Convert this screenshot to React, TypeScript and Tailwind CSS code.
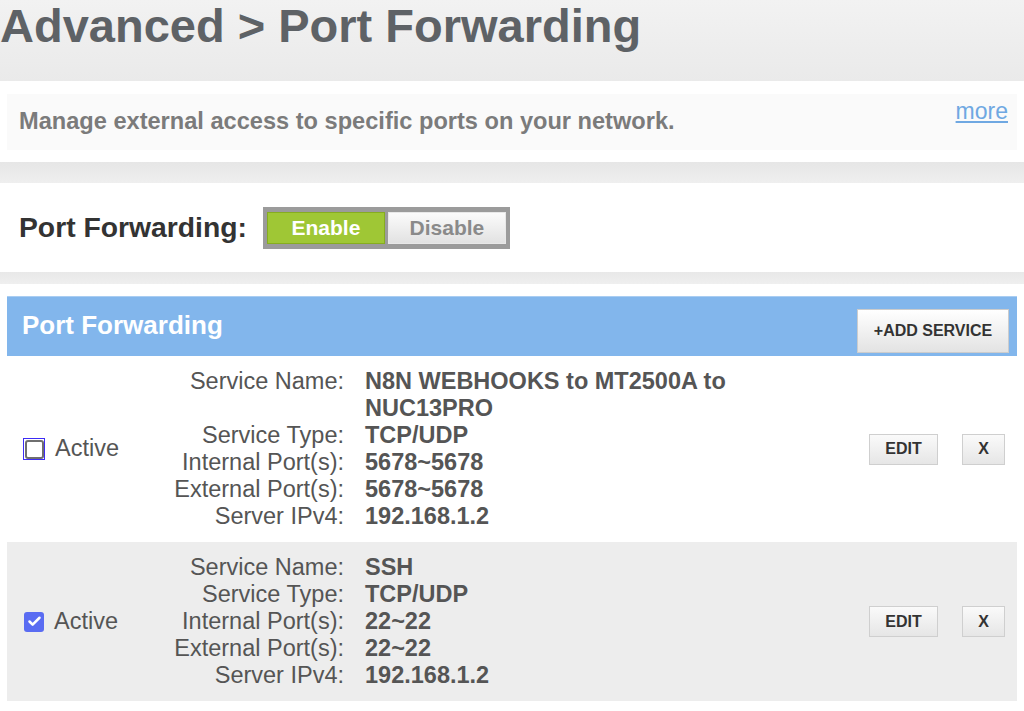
import { Check } from "lucide-react";

type Service = {
  active: boolean;
  name: string;
  type: string;
  internal: string;
  external: string;
  ip: string;
};

const SERVICES: Service[] = [
  {
    active: false,
    name: "N8N WEBHOOKS to MT2500A to NUC13PRO",
    type: "TCP/UDP",
    internal: "5678~5678",
    external: "5678~5678",
    ip: "192.168.1.2",
  },
  {
    active: true,
    name: "SSH",
    type: "TCP/UDP",
    internal: "22~22",
    external: "22~22",
    ip: "192.168.1.2",
  },
];

function Checkbox({ checked }: { checked: boolean }) {
  if (checked) {
    return (
      <span className="ml-[1px] flex h-[20px] w-[20px] items-center justify-center rounded-[3px] bg-[#5a6cf2]">
        <Check className="h-[15px] w-[15px] text-white" strokeWidth={4} />
      </span>
    );
  }
  return (
    <span className="flex h-[22px] w-[22px] items-center justify-center border border-[#3d2cf5]">
      <span className="h-[19px] w-[19px] rounded-[3px] border-2 border-[#6f6f6f] bg-white" />
    </span>
  );
}

function SmallButton({ children, wide }: { children: string; wide?: boolean }) {
  return (
    <button
      type="button"
      className={
        "flex h-[31px] items-center justify-center border border-[#cfcfcf] bg-gradient-to-b from-[#fafafa] to-[#e6e6e6] text-[16px] font-bold text-[#333] " +
        (wide ? "w-[69px]" : "w-[43px]")
      }
    >
      {children}
    </button>
  );
}

function ServiceRow({ s, shaded }: { s: Service; shaded: boolean }) {
  const rows: [string, string][] = [
    ["Service Name:", s.name],
    ["Service Type:", s.type],
    ["Internal Port(s):", s.internal],
    ["External Port(s):", s.external],
    ["Server IPv4:", s.ip],
  ];
  return (
    <div
      className={
        "mx-[7px] flex items-center py-3 pl-4 pr-3 " +
        (shaded ? "bg-[#ededed]" : "bg-white")
      }
    >
      <div className="flex w-[147px] items-center gap-[10px]">
        <Checkbox checked={s.active} />
        <span className="text-[23.5px] text-[#555]">Active</span>
      </div>
      <div className="grid grid-cols-[174px_440px] gap-x-[21px] text-[23.5px] leading-[27px] text-[#555]">
        {rows.map(([label, value]) => (
          <div key={label} className="contents">
            <div className="text-right">{label}</div>
            <div className="font-bold">{value}</div>
          </div>
        ))}
      </div>
      <div className="ml-auto flex items-center gap-[24px]">
        <SmallButton wide>EDIT</SmallButton>
        <SmallButton>X</SmallButton>
      </div>
    </div>
  );
}

export default function App() {
  return (
    <div className="min-h-[711px] w-[1024px] bg-white font-['Liberation_Sans',Arial,sans-serif]">
      {/* page title */}
      <div className="h-[81px] bg-gradient-to-b from-[#f2f2f2] to-[#eaeaea]">
        <h1 className="text-[47px] font-bold leading-[52px] text-[#5e6266]">
          Advanced &gt; Port Forwarding
        </h1>
      </div>

      {/* description */}
      <div className="pb-3 pt-[13px]">
        <div className="mx-[7px] flex h-[56px] justify-between bg-[#fafafa] pl-3 pr-[9px]">
          <p className="self-center text-[23.6px] font-bold text-[#7b7b7b]">
            Manage external access to specific ports on your network.
          </p>
          <a href="#" className="self-start text-[23px] text-[#6fa8e2] underline">
            more
          </a>
        </div>
      </div>

      <div className="h-[21px] bg-gradient-to-b from-[#e6e6e6] to-[#efefef]" />

      {/* enable toggle */}
      <div className="flex h-[89px] items-center gap-4 px-[19px]">
        <span className="text-[28.3px] font-bold text-[#333]">Port Forwarding:</span>
        <div className="flex gap-[3px] bg-[#9b9b9b] px-[4px] py-[5px]">
          <button
            type="button"
            className="flex h-[32px] w-[118px] items-center justify-center border border-[#86ad1f] bg-[#9fc735] text-[21px] font-bold text-white"
          >
            Enable
          </button>
          <button
            type="button"
            className="flex h-[32px] w-[118px] items-center justify-center border border-[#e8e8e8] bg-gradient-to-b from-[#fbfbfb] to-[#e2e2e2] text-[21px] font-bold text-[#8a8a8a]"
          >
            Disable
          </button>
        </div>
      </div>

      <div className="h-[12px] bg-gradient-to-b from-[#e8e8e8] to-[#efefef]" />
      <div className="h-[12px]" />

      {/* table header */}
      <div className="mx-[7px] flex h-[60px] items-end justify-between border-t border-[#a9cdf2] bg-[#82b6ec] pb-[3px] pl-[15px] pr-[8px]">
        <h2 className="self-center text-[26px] font-bold text-white">Port Forwarding</h2>
        <button
          type="button"
          className="flex h-[44px] w-[152px] items-center justify-center border border-[#cccccc] bg-gradient-to-b from-white to-[#e3e3e3] text-[16px] font-bold text-[#333]"
        >
          +ADD SERVICE
        </button>
      </div>

      {SERVICES.map((s, i) => (
        <ServiceRow key={s.name} s={s} shaded={i % 2 === 1} />
      ))}
    </div>
  );
}
